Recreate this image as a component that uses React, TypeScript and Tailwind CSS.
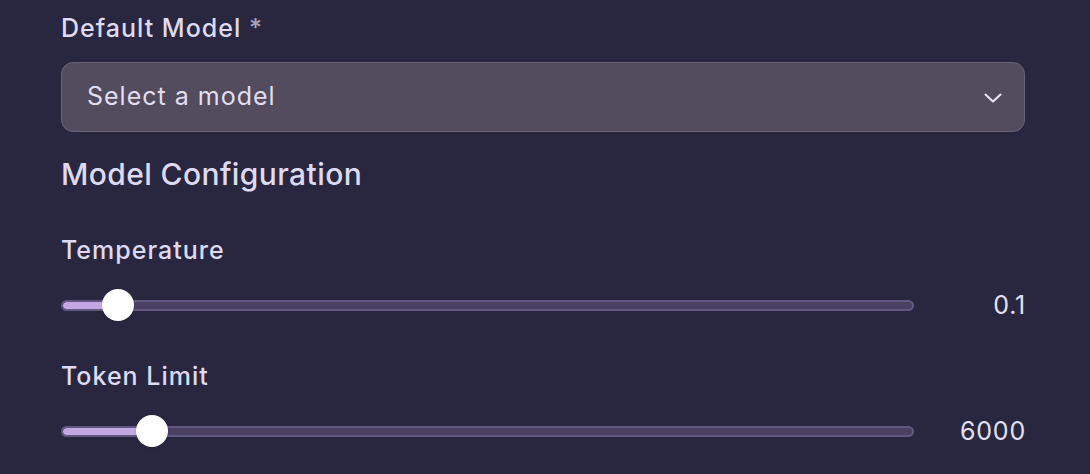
import { useState } from 'react';

interface SliderRowProps {
  label: string;
  value: number;
  min: number;
  max: number;
  display: string;
}

function SliderRow({ label, value, min, max, display }: SliderRowProps) {
  const pct = (value - min) / (max - min);

  return (
    <div>
      <div className="text-[25px] leading-[32px] font-medium tracking-[1px] text-[#dedaf2]">{label}</div>
      <div className="mt-[23px] flex items-center h-[32px]">
        {/* Track */}
        <div className="relative flex-1 h-[32px] flex items-center">
          <div className="w-full h-[11px] rounded-full bg-[#4a4162] border-2 border-[#625780] overflow-hidden">
            <div
              className="h-full bg-[#c3a7e3] rounded-l-full"
              style={{ width: `calc(${pct} * (100% - 32px) + 16px)` }}
            />
          </div>
          <div
            className="absolute top-0 w-[32px] h-[32px] rounded-full bg-white shadow-sm"
            style={{ left: `calc(${pct} * (100% - 32px))` }}
          />
        </div>
        <div className="w-[112px] text-right text-[25px] leading-[32px] tracking-[0.8px] -mr-[1px] text-[#e4e0f4]">{display}</div>
      </div>
    </div>
  );
}

export default function App() {
  const [model] = useState<string | null>(null);

  return (
    <div className="min-h-screen w-full bg-[#29273f] font-['Inter','Noto_Sans',sans-serif]">
      <div className="pl-[61px] pt-[12px] w-[1025px]">
        <label className="block text-[25px] leading-[32px] font-medium tracking-[1px] text-[#dedaf2]">
          Default Model <span className="text-[#a9a5ba]">*</span>
        </label>

        <button className="mt-[18px] w-full h-[70px] rounded-[12px] bg-[#524c5e] border border-[#6a6378] pl-[25px] pr-[22px] flex items-center justify-between">
          <span className="text-[25px] tracking-[1px] text-[#e2def2]">{model ?? 'Select a model'}</span>
          <svg width="18" height="10" viewBox="0 0 18 10" fill="none" className="mt-[1px]">
            <path d="M1.5 1.5L9 8.5L16.5 1.5" stroke="#ebe8f6" strokeWidth="2" strokeLinecap="round" strokeLinejoin="round" />
          </svg>
        </button>

        <h3 className="mt-[24px] text-[30px] leading-[36px] font-medium tracking-[0.4px] text-[#dedaf2]">Model Configuration</h3>

        <div className="mt-[42px] flex flex-col gap-[39px]">
          <SliderRow label="Temperature" value={0.1} min={0} max={2} display="0.1" />
          <SliderRow label="Token Limit" value={6000} min={0} max={65536} display="6000" />
        </div>
      </div>
    </div>
  );
}
